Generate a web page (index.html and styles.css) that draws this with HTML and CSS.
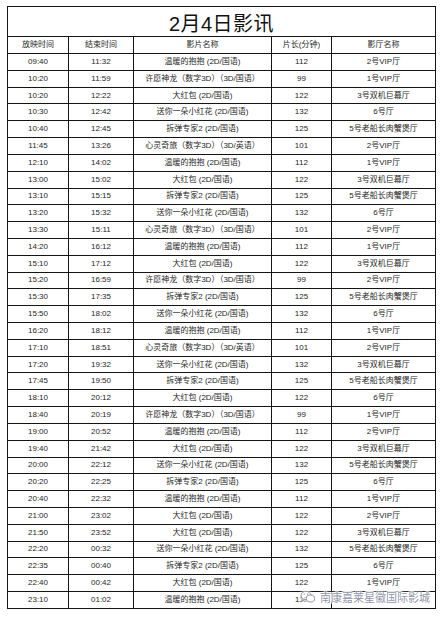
FILE: index.html
```html
<!DOCTYPE html>
<html lang="zh">
<head>
<meta charset="utf-8">
<title>2月4日影讯</title>
<link rel="stylesheet" href="styles.css">
</head>
<body>
<div class="page">
  <div class="sheet">
    <div class="title">2月4日影讯</div>
    <div class="cell head">放映时间</div><div class="cell head">结束时间</div><div class="cell head">影片名称</div><div class="cell head">片长(分钟)</div><div class="cell head">影厅名称</div>

    <div class="cell">09:40</div><div class="cell">11:32</div><div class="cell">温暖的抱抱 (2D/国语)</div><div class="cell">112</div><div class="cell">2号VIP厅</div>
    <div class="cell">10:20</div><div class="cell">11:59</div><div class="cell">许愿神龙（数字3D）（3D/国语）</div><div class="cell">99</div><div class="cell">1号VIP厅</div>
    <div class="cell">10:20</div><div class="cell">12:22</div><div class="cell">大红包 (2D/国语)</div><div class="cell">122</div><div class="cell">3号双机巨幕厅</div>
    <div class="cell">10:30</div><div class="cell">12:42</div><div class="cell">送你一朵小红花 (2D/国语)</div><div class="cell">132</div><div class="cell">6号厅</div>
    <div class="cell">10:40</div><div class="cell">12:45</div><div class="cell">拆弹专家2 (2D/国语)</div><div class="cell">125</div><div class="cell">5号老船长肉蟹煲厅</div>
    <div class="cell">11:45</div><div class="cell">13:26</div><div class="cell">心灵奇旅（数字3D）（3D/英语）</div><div class="cell">101</div><div class="cell">2号VIP厅</div>
    <div class="cell">12:10</div><div class="cell">14:02</div><div class="cell">温暖的抱抱 (2D/国语)</div><div class="cell">112</div><div class="cell">1号VIP厅</div>
    <div class="cell">13:00</div><div class="cell">15:02</div><div class="cell">大红包 (2D/国语)</div><div class="cell">122</div><div class="cell">3号双机巨幕厅</div>
    <div class="cell">13:10</div><div class="cell">15:15</div><div class="cell">拆弹专家2 (2D/国语)</div><div class="cell">125</div><div class="cell">5号老船长肉蟹煲厅</div>
    <div class="cell">13:20</div><div class="cell">15:32</div><div class="cell">送你一朵小红花 (2D/国语)</div><div class="cell">132</div><div class="cell">6号厅</div>
    <div class="cell">13:30</div><div class="cell">15:11</div><div class="cell">心灵奇旅（数字3D）（3D/国语）</div><div class="cell">101</div><div class="cell">2号VIP厅</div>
    <div class="cell">14:20</div><div class="cell">16:12</div><div class="cell">温暖的抱抱 (2D/国语)</div><div class="cell">112</div><div class="cell">1号VIP厅</div>
    <div class="cell">15:10</div><div class="cell">17:12</div><div class="cell">大红包 (2D/国语)</div><div class="cell">122</div><div class="cell">3号双机巨幕厅</div>
    <div class="cell">15:20</div><div class="cell">16:59</div><div class="cell">许愿神龙（数字3D）（3D/国语）</div><div class="cell">99</div><div class="cell">2号VIP厅</div>
    <div class="cell">15:30</div><div class="cell">17:35</div><div class="cell">拆弹专家2 (2D/国语)</div><div class="cell">125</div><div class="cell">5号老船长肉蟹煲厅</div>
    <div class="cell">15:50</div><div class="cell">18:02</div><div class="cell">送你一朵小红花 (2D/国语)</div><div class="cell">132</div><div class="cell">6号厅</div>
    <div class="cell">16:20</div><div class="cell">18:12</div><div class="cell">温暖的抱抱 (2D/国语)</div><div class="cell">112</div><div class="cell">1号VIP厅</div>
    <div class="cell">17:10</div><div class="cell">18:51</div><div class="cell">心灵奇旅（数字3D）（3D/英语）</div><div class="cell">101</div><div class="cell">2号VIP厅</div>
    <div class="cell">17:20</div><div class="cell">19:32</div><div class="cell">送你一朵小红花 (2D/国语)</div><div class="cell">132</div><div class="cell">3号双机巨幕厅</div>
    <div class="cell">17:45</div><div class="cell">19:50</div><div class="cell">拆弹专家2 (2D/国语)</div><div class="cell">125</div><div class="cell">5号老船长肉蟹煲厅</div>
    <div class="cell">18:10</div><div class="cell">20:12</div><div class="cell">大红包 (2D/国语)</div><div class="cell">122</div><div class="cell">6号厅</div>
    <div class="cell">18:40</div><div class="cell">20:19</div><div class="cell">许愿神龙（数字3D）（3D/国语）</div><div class="cell">99</div><div class="cell">1号VIP厅</div>
    <div class="cell">19:00</div><div class="cell">20:52</div><div class="cell">温暖的抱抱 (2D/国语)</div><div class="cell">112</div><div class="cell">2号VIP厅</div>
    <div class="cell">19:40</div><div class="cell">21:42</div><div class="cell">大红包 (2D/国语)</div><div class="cell">122</div><div class="cell">3号双机巨幕厅</div>
    <div class="cell">20:00</div><div class="cell">22:12</div><div class="cell">送你一朵小红花 (2D/国语)</div><div class="cell">132</div><div class="cell">5号老船长肉蟹煲厅</div>
    <div class="cell">20:20</div><div class="cell">22:25</div><div class="cell">拆弹专家2 (2D/国语)</div><div class="cell">125</div><div class="cell">6号厅</div>
    <div class="cell">20:40</div><div class="cell">22:32</div><div class="cell">温暖的抱抱 (2D/国语)</div><div class="cell">112</div><div class="cell">1号VIP厅</div>
    <div class="cell">21:00</div><div class="cell">23:02</div><div class="cell">大红包 (2D/国语)</div><div class="cell">122</div><div class="cell">2号VIP厅</div>
    <div class="cell">21:50</div><div class="cell">23:52</div><div class="cell">大红包 (2D/国语)</div><div class="cell">122</div><div class="cell">3号双机巨幕厅</div>
    <div class="cell">22:20</div><div class="cell">00:32</div><div class="cell">送你一朵小红花 (2D/国语)</div><div class="cell">132</div><div class="cell">5号老船长肉蟹煲厅</div>
    <div class="cell">22:35</div><div class="cell">00:40</div><div class="cell">拆弹专家2 (2D/国语)</div><div class="cell">125</div><div class="cell">6号厅</div>
    <div class="cell">22:40</div><div class="cell">00:42</div><div class="cell">大红包 (2D/国语)</div><div class="cell">122</div><div class="cell">1号VIP厅</div>
    <div class="cell">23:10</div><div class="cell">01:02</div><div class="cell">温暖的抱抱 (2D/国语)</div><div class="cell">112</div><div class="cell"></div>
  </div>
  <div class="watermark">
    <svg class="wm-icon" width="16" height="14" viewBox="0 0 16 14">
      <ellipse cx="6" cy="5.5" rx="5" ry="4.2" fill="none" stroke="#8e93a3" stroke-width="1"/>
      <ellipse cx="10.5" cy="8.5" rx="4.2" ry="3.5" fill="#fff" stroke="#8e93a3" stroke-width="1"/>
      <circle cx="4.2" cy="4.3" r="0.7" fill="#8e93a3"/>
      <circle cx="7.6" cy="4.3" r="0.7" fill="#8e93a3"/>
      <path d="M3 9 L2.4 11.2 L4.8 9.8" fill="none" stroke="#8e93a3" stroke-width="0.9"/>
    </svg>
    <span class="wm-text">南康嘉莱星徽国际影城</span>
  </div>
</div>
</body>
</html>
```
FILE: styles.css
```css
html, body {
  margin: 0;
  padding: 0;
  background: #ffffff;
}

.page {
  position: relative;
  width: 444px;
  height: 617px;
  padding: 6px 0 0 7px;
  box-sizing: border-box;
}

.sheet {
  display: grid;
  width: 429px;
  grid-template-columns: 60px 64px 137px 59px 103px;
  grid-template-rows: 29px 16px repeat(33, 15.82px);
  gap: 1px;
  padding: 1px;
  box-sizing: border-box;
  background: #141414;
  font-family: "Liberation Sans", "Noto Sans CJK SC", sans-serif;
  font-size: 8px;
  color: #262626;
}

.title {
  grid-column: 1 / -1;
  background: #fff;
  display: flex;
  align-items: center;
  justify-content: center;
  font-size: 20px;
  color: #111;
  letter-spacing: 0.5px;
  padding-top: 1px;
}

.cell {
  background: #fff;
  display: flex;
  align-items: center;
  justify-content: center;
  white-space: nowrap;
  overflow: hidden;
  line-height: 1;
}

.head {
  color: #2a2a2a;
}

.watermark {
  position: absolute;
  left: 300px;
  top: 590px;
  display: flex;
  align-items: center;
  gap: 4px;
}

.wm-icon {
  display: block;
  filter: drop-shadow(0 0 1px #fff) drop-shadow(0 0 1px #fff);
}

.wm-text {
  font-family: "Noto Sans CJK SC", sans-serif;
  font-size: 11px;
  line-height: 14px;
  color: rgba(130, 136, 155, 0.9);
  text-shadow: 0 0 1px #fff, 0 0 2px #fff, 1px 1px 1px #fff, -1px -1px 1px #fff, 1px -1px 1px #fff, -1px 1px 1px #fff;
}
```
